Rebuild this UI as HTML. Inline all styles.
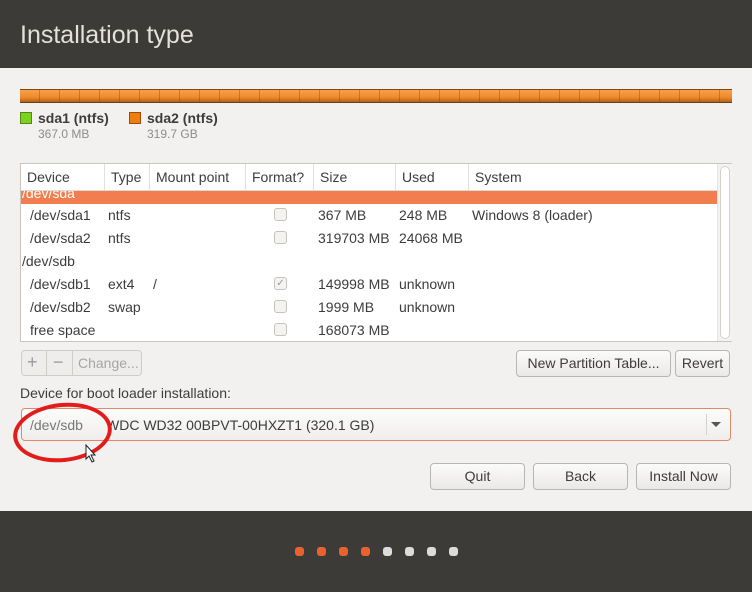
<!DOCTYPE html>
<html><head><style>
*{margin:0;padding:0;box-sizing:border-box}
body{width:752px;height:592px;background:#f2f1f0;font-family:"Liberation Sans",sans-serif;font-size:14px;color:#3c3c3c;position:relative;overflow:hidden}
.a{position:absolute;white-space:nowrap}
.hdr{left:0;top:0;width:752px;height:68px;background:#3c3b37}
.ftr{left:0;top:511px;width:752px;height:81px;background:#3c3b37}
.bar{left:20px;top:89px;width:712px;height:14px;border-top:1px solid #7a4b10;border-bottom:1px solid #6b3e0d;background-image:repeating-linear-gradient(90deg,transparent 0 19px,rgba(120,60,10,.35) 19px 20px),linear-gradient(#f7a04a,#ef8a2c 60%,#b0621c)}
.tbl{left:20px;top:163px;width:712px;height:179px;background:#fff;border:1px solid #c9c6c2}
.th{top:0;height:26px;line-height:26px;border-right:1px solid #e2e0dd;padding-left:6px;color:#3c3c3c}
.cb{width:13px;height:13px;border:1px solid #c6c3bf;border-radius:3px;background:#f4f3f2}
.btn{border:1px solid #b9b6b2;border-radius:4px;background:linear-gradient(#fbfbfa,#ebe9e7);text-align:center;color:#3c3c3c}
.dot{width:9px;height:9px;border-radius:3px;top:547px}
</style></head><body>
<div class="a hdr"></div>
<div class="a" style="left:20px;top:21px;font-size:25px;color:#e4e1da">Installation type</div>
<div class="a bar"></div>
<div class="a" style="left:20px;top:112px;width:12px;height:12px;background:#7cd21f;border:1px solid #4f8a14"></div>
<div class="a" style="left:38px;top:110px;font-weight:bold">sda1 (ntfs)</div>
<div class="a" style="left:38px;top:127px;font-size:12px;color:#8c8c8c">367.0 MB</div>
<div class="a" style="left:129px;top:112px;width:12px;height:12px;background:#f07e0e;border:1px solid #9a4d08"></div>
<div class="a" style="left:147px;top:110px;font-weight:bold">sda2 (ntfs)</div>
<div class="a" style="left:147px;top:127px;font-size:12px;color:#8c8c8c">319.7 GB</div>

<div class="a tbl">
<div class="a" style="left:0;top:0;width:696px;height:27px;border-bottom:1px solid #dcdad7"></div>
<div class="a th" style="left:0;width:84px">Device</div>
<div class="a th" style="left:84px;width:45px">Type</div>
<div class="a th" style="left:129px;width:96px">Mount point</div>
<div class="a th" style="left:225px;width:68px">Format?</div>
<div class="a th" style="left:293px;width:82px">Size</div>
<div class="a th" style="left:375px;width:73px">Used</div>
<div class="a th" style="left:448px;width:248px;border:none">System</div>
<div class="a" style="left:0;top:27px;width:696px;height:13px;background:#f27e4f;overflow:hidden"><span style="position:absolute;left:1px;top:-6px;color:#fff">/dev/sda</span></div>
<div class="a" style="left:696px;top:0;width:15px;height:177px;background:#f4f3f2;border-left:1px solid #e6e4e1"><div style="margin:2px 2px;height:173px;border:1px solid #d4d1cd;border-radius:6px;background:#fff"></div></div>
</div>
<div class="a" style="left:30px;top:207px">/dev/sda1</div><div class="a" style="left:108px;top:207px">ntfs</div><div class="a cb" style="left:274px;top:208px"></div><div class="a" style="left:318px;top:207px">367 MB</div><div class="a" style="left:399px;top:207px">248 MB</div><div class="a" style="left:472px;top:207px">Windows 8 (loader)</div>
<div class="a" style="left:30px;top:230px">/dev/sda2</div><div class="a" style="left:108px;top:230px">ntfs</div><div class="a cb" style="left:274px;top:231px"></div><div class="a" style="left:318px;top:230px">319703 MB</div><div class="a" style="left:399px;top:230px">24068 MB</div>
<div class="a" style="left:22px;top:253px">/dev/sdb</div>
<div class="a" style="left:30px;top:276px">/dev/sdb1</div><div class="a" style="left:108px;top:276px">ext4</div><div class="a" style="left:153px;top:276px">/</div><div class="a cb" style="left:274px;top:277px;font-size:10px;line-height:11px;text-align:center;color:#999">✓</div><div class="a" style="left:318px;top:276px">149998 MB</div><div class="a" style="left:399px;top:276px">unknown</div>
<div class="a" style="left:30px;top:299px">/dev/sdb2</div><div class="a" style="left:108px;top:299px">swap</div><div class="a cb" style="left:274px;top:300px"></div><div class="a" style="left:318px;top:299px">1999 MB</div><div class="a" style="left:399px;top:299px">unknown</div>
<div class="a" style="left:30px;top:322px">free space</div><div class="a cb" style="left:274px;top:323px"></div><div class="a" style="left:318px;top:322px">168073 MB</div>

<div class="a btn" style="left:21px;top:350px;width:121px;height:26px;border-color:#d0cdc9;background:#eeedeb"></div>
<div class="a" style="left:46px;top:351px;width:1px;height:24px;background:#d0cdc9"></div>
<div class="a" style="left:72px;top:351px;width:1px;height:24px;background:#d0cdc9"></div>
<div class="a" style="left:27px;top:352px;font-size:18px;color:#999">+</div>
<div class="a" style="left:53px;top:352px;font-size:18px;color:#999">−</div>
<div class="a" style="left:78px;top:355px;color:#a5a5a5">Change...</div>
<div class="a btn" style="left:516px;top:350px;width:155px;height:27px;line-height:25px">New Partition Table...</div>
<div class="a btn" style="left:675px;top:350px;width:55px;height:27px;line-height:25px">Revert</div>
<div class="a" style="left:20px;top:385px">Device for boot loader installation:</div>
<div class="a" style="left:21px;top:408px;width:710px;height:33px;border:1px solid #e0896a;border-radius:4px;background:linear-gradient(#fcfcfb,#efeeec)"></div>
<div class="a" style="left:706px;top:414px;width:1px;height:21px;background:#d6d3cf"></div>
<div class="a" style="left:711px;top:422px;width:0;height:0;border-left:5px solid transparent;border-right:5px solid transparent;border-top:5px solid #555"></div>
<div class="a" style="left:30px;top:417px;color:#777">/dev/sdb</div>
<div class="a" style="left:106px;top:417px">WDC WD32 00BPVT-00HXZT1 (320.1 GB)</div>
<div class="a" style="left:13px;top:403px;width:99px;height:59px;border:4px solid #e21b1b;border-radius:50%;transform:rotate(-6deg)"></div>
<svg class="a" style="left:85px;top:444px" width="12" height="20"><path d="M1 1 L1 15 L4 12 L7 18 L9 17 L6 11 L10 11 Z" fill="#fff" stroke="#222"/></svg>
<div class="a btn" style="left:430px;top:463px;width:95px;height:27px;line-height:25px">Quit</div>
<div class="a btn" style="left:533px;top:463px;width:95px;height:27px;line-height:25px">Back</div>
<div class="a btn" style="left:636px;top:463px;width:95px;height:27px;line-height:25px">Install Now</div>
<div class="a ftr"></div>
<div class="a dot" style="left:295px;background:#e8622e"></div>
<div class="a dot" style="left:317px;background:#e8622e"></div>
<div class="a dot" style="left:339px;background:#e8622e"></div>
<div class="a dot" style="left:361px;background:#e8622e"></div>
<div class="a dot" style="left:383px;background:#dcdcdc"></div>
<div class="a dot" style="left:405px;background:#dcdcdc"></div>
<div class="a dot" style="left:427px;background:#dcdcdc"></div>
<div class="a dot" style="left:449px;background:#dcdcdc"></div>
</body></html>
